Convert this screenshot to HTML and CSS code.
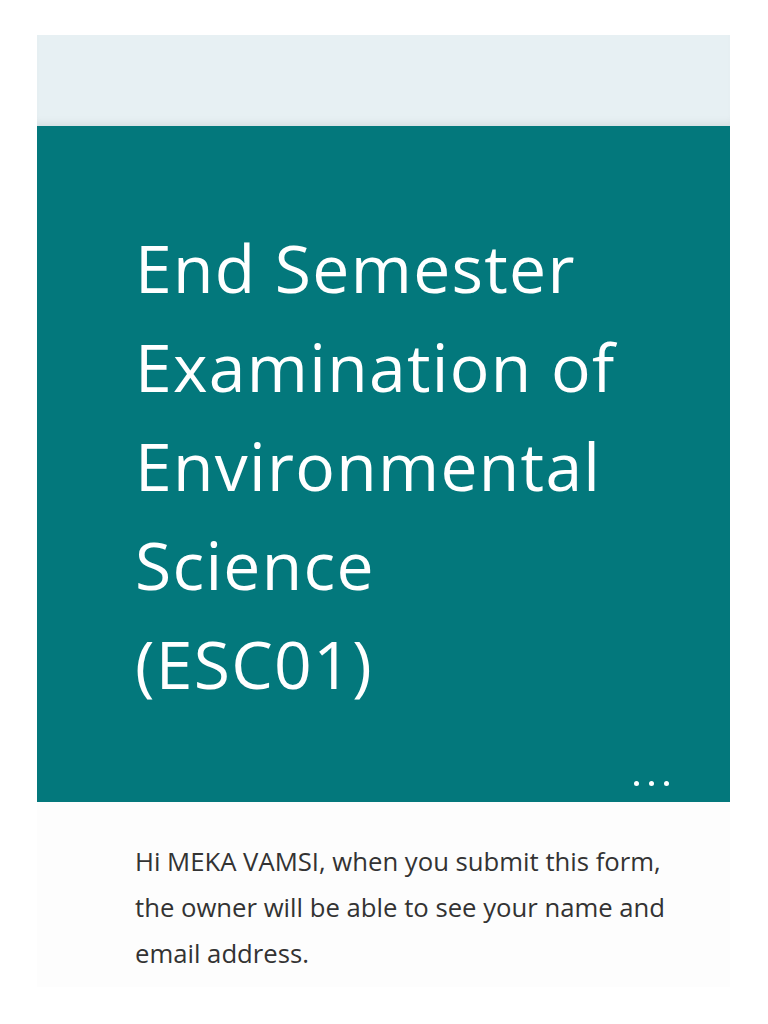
FILE: index.html
```html
<!DOCTYPE html>
<html lang="en">
<head>
<meta charset="utf-8">
<title>End Semester Examination of Environmental Science (ESC01)</title>
<link rel="stylesheet" href="styles.css">
</head>
<body>
<main class="card">
  <div class="strip"></div>
  <header class="hero">
    <h1 class="title">End Semester<br>Examination of<br>Environmental<br>Science<br>(ESC01)</h1>
    <div class="more" aria-label="More options"><span></span><span></span><span></span></div>
  </header>
  <section class="notice">
    <p class="notice-text">Hi MEKA VAMSI, when you submit this form,<br>the owner will be able to see your name and<br>email address.</p>
  </section>
</main>
</body>
</html>
```
FILE: styles.css
```css
html, body {
  margin: 0;
  padding: 0;
  background: #ffffff;
}
body {
  padding: 35px 38px 0 37px;
  font-family: "Open Sans", "Noto Sans", sans-serif;
}
.card {
  width: 693px;
  display: flex;
  flex-direction: column;
}
.strip {
  height: 91px;
  background: #e7f0f3;
  box-shadow: inset 0 -8px 8px -6px rgba(0, 40, 50, 0.10);
}
.hero {
  position: relative;
  height: 676px;
  box-sizing: border-box;
  background: #03787c;
  padding: 92px 30px 0 98px;
}
.title {
  margin: 0;
  color: #ffffff;
  font-weight: 400;
  font-size: 66px;
  line-height: 99px;
  letter-spacing: 1.3px;
}
.more {
  position: absolute;
  right: 61px;
  bottom: 16px;
  display: flex;
  gap: 10px;
}
.more span {
  width: 5px;
  height: 5px;
  border-radius: 50%;
  background: #ffffff;
}
.notice {
  background: #fdfdfd;
  height: 185px;
  box-sizing: border-box;
  padding: 37px 20px 0 98px;
}
.notice-text {
  margin: 0;
  color: #333333;
  font-size: 25.7px;
  line-height: 46px;
}
```
